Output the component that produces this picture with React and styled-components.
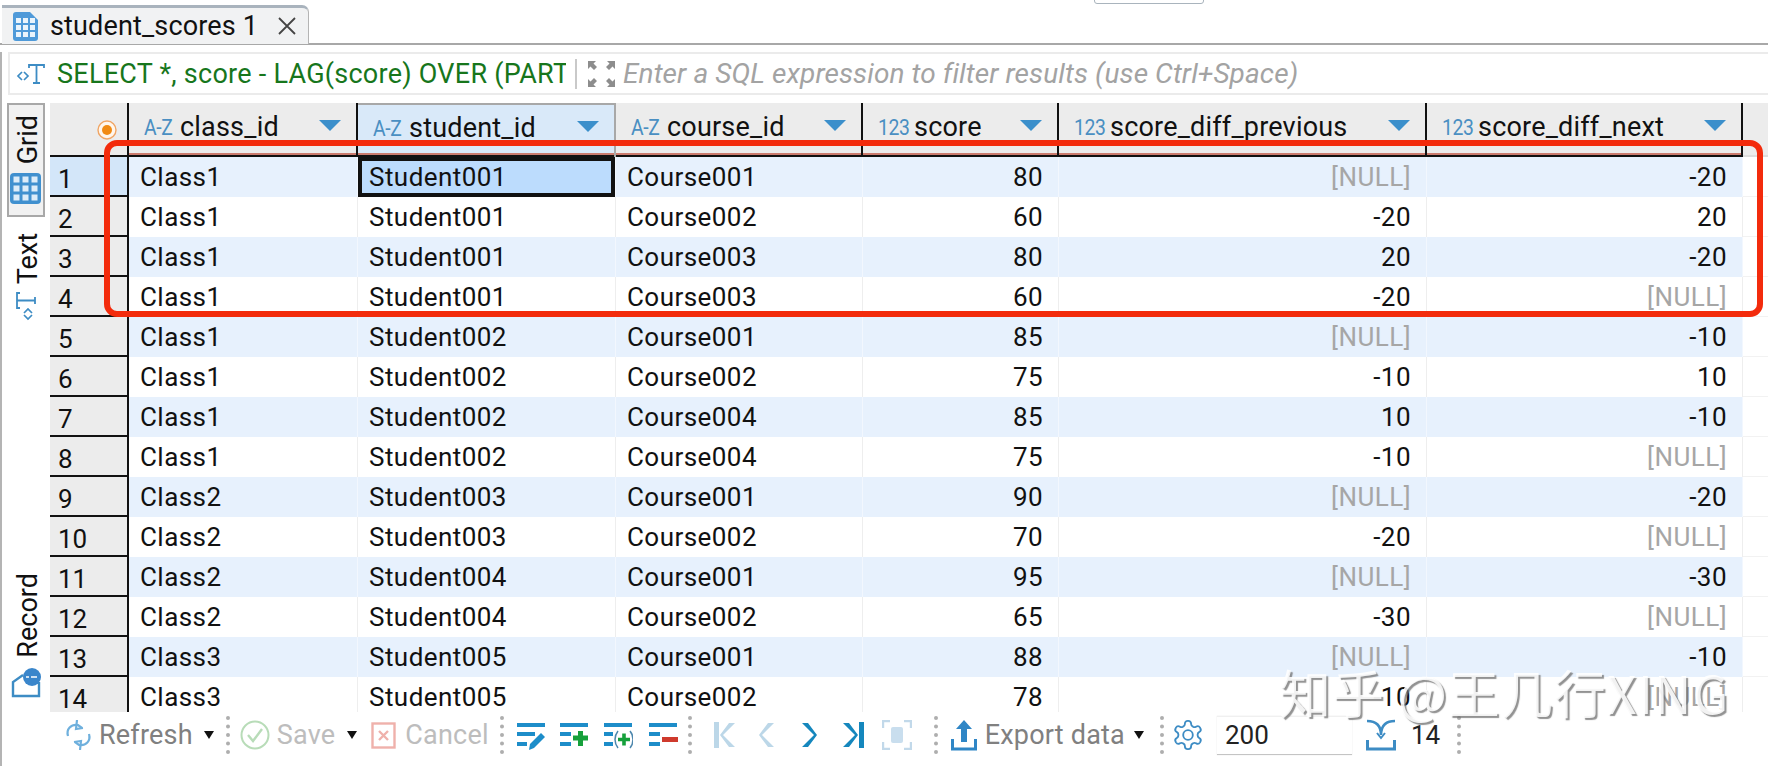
import React from 'react'
import styled, { createGlobalStyle } from 'styled-components'

const GlobalStyle = createGlobalStyle`
  html, body { margin: 0; padding: 0; background: #fff; }
  body { font-family: Roboto, "Liberation Sans", Arial, sans-serif; color: #111; }
`

const BLUE = '#3d8cc4'
const COLUMNS = '79px 229px 258px 247px 196px 368px 316px 25px'

const Page = styled.div`
  position: relative;
  width: 1768px;
  height: 766px;
  overflow: hidden;
  background: #fff;
`

const CutButton = styled.div`
  position: absolute;
  left: 1094px;
  top: -10px;
  width: 108px;
  height: 12px;
  border: 1px solid #a9b4bd;
  border-radius: 3px;
`

const TabStrip = styled.div`
  height: 45px;
  box-sizing: border-box;
  border-bottom: 2px solid #a8a8a8;
  display: flex;
  align-items: flex-end;
  padding-left: 2px;
`

const Tab = styled.div`
  width: 307px;
  height: 39px;
  box-sizing: border-box;
  background: #f1f2f3;
  border-top: 3px solid #a9b3bd;
  border-right: 1px solid #b4b4b4;
  border-top-right-radius: 7px;
  display: flex;
  align-items: center;
  padding-left: 11px;
  margin-bottom: -1px;
`

const TabTitle = styled.span`
  font-size: 27px;
  margin-left: 12px;
  letter-spacing: 0.15px;
`

const Body = styled.div`
  border-left: 2px solid #b4b4b4;
  height: 721px;
`

const FilterBar = styled.div`
  height: 43px;
  box-sizing: border-box;
  margin: 7px 0 8px 6px;
  border-top: 2px solid #ebebeb;
  border-bottom: 2px solid #ebebeb;
  border-left: 2px solid #ebebeb;
  display: flex;
  align-items: center;
  padding-left: 6px;
`

const SqlText = styled.span`
  width: 509px;
  margin-left: 11px;
  overflow: hidden;
  white-space: nowrap;
  font-size: 27px;
  letter-spacing: 0.25px;
  color: #17761c;
`

const FilterDivider = styled.span`
  width: 2px;
  height: 30px;
  margin: 0 10px 0 9px;
  background: #c9c9c9;
`

const Placeholder = styled.span`
  margin-left: 7px;
  font-size: 28px;
  letter-spacing: 0.1px;
  font-style: italic;
  color: #a3a3a3;
  white-space: nowrap;
`

const Main = styled.div`
  display: flex;
  height: 609px;
`

const Rail = styled.div`
  width: 48px;
  flex: none;
  display: flex;
  flex-direction: column;
  justify-content: space-between;
  padding-bottom: 14px;
  box-sizing: border-box;
`

const RailGroup = styled.div`
  display: flex;
  flex-direction: column;
  align-items: center;
`

const GridTab = styled.div`
  width: 38px;
  height: 114px;
  box-sizing: border-box;
  margin-left: -1px;
  border: 2px solid #a8a8a8;
  background: #f1f1f1;
  display: flex;
  flex-direction: column;
  align-items: center;
  padding-top: 10px;
`

const RailLabel = styled.span`
  writing-mode: vertical-rl;
  transform: rotate(180deg) translateX(-2px);
  font-size: 27px;
  line-height: 28px;
  margin-top: ${p => p.$top || 0}px;
  margin-bottom: ${p => p.$bottom || 0}px;
`

const Table = styled.div`
  flex: 1;
  overflow: hidden;
`

const HeaderRow = styled.div`
  display: grid;
  grid-template-columns: ${COLUMNS};
  height: 54px;
`

const Corner = styled.div`
  background: #ececec;
  border-right: 2px solid #111;
  border-bottom: 2px solid #111;
  display: flex;
  justify-content: flex-end;
  align-items: flex-start;
  padding: 17px 10px 0 0;
`

const HeaderCell = styled.div`
  box-sizing: border-box;
  height: 54px;
  background: ${p => (p.$active ? '#d9e9f9' : '#ececec')};
  border-top: ${p => (p.$active ? '2px solid #a8a8a8' : '0')};
  border-right: ${p => (p.$active ? '2px solid #a8a8a8' : '2px solid #111')};
  box-shadow: inset 0 -2px 0 #111, inset 0 -4px 0 #cb7b6e;
  display: flex;
  align-items: center;
  padding: 0 15px 6px 15px;
  font-size: 27px;
`

const HeaderFill = styled.div`
  background: #ececec;
  box-shadow: inset 0 -2px 0 #ddd;
`

const TypeTag = styled.span`
  color: #4a8fc2;
  font-size: 22px;
  letter-spacing: -0.4px;
  margin-right: 3px;
  transform: scaleX(0.88);
  transform-origin: left center;
  width: 33px;
  flex: none;
`

const ColName = styled.span`
  flex: 1;
  white-space: nowrap;
  letter-spacing: 0.2px;
`

const SortArrow = styled.span`
  width: 0;
  height: 0;
  border-left: 11px solid transparent;
  border-right: 11px solid transparent;
  border-top: 11px solid #3b8fcb;
  margin-top: -3px;
`

const Row = styled.div`
  display: grid;
  grid-template-columns: ${COLUMNS};
  grid-template-rows: 40px;
  height: 40px;
`

const RowNum = styled.div`
  box-sizing: border-box;
  background: ${p => (p.$current ? '#d3e6f9' : '#ececec')};
  border-right: 2px solid #111;
  border-bottom: 2px solid #111;
  padding: 5px 0 0 8px;
  font-size: 26px;
  line-height: 34px;
`

const Cell = styled.div`
  box-sizing: border-box;
  background: ${p => (p.$selected ? '#bcdcfd' : p.$stripe ? '#e7f1fd' : '#fff')};
  border-right: 1px solid ${p => (p.$stripe ? '#f2f7fe' : '#eeeeee')};
  box-shadow: ${p => (p.$selected ? 'inset 0 0 0 4px #111' : 'none')};
  padding: ${p => (p.$num ? '0 15px 0 0' : '0 0 0 11px')};
  text-align: ${p => (p.$num ? 'right' : 'left')};
  color: ${p => (p.$nil ? '#a6a6a6' : '#111')};
  font-size: 26px;
  line-height: 40px;
  letter-spacing: 0.45px;
  white-space: nowrap;
`

const RowEnd = styled.div`
  background: #fff;
  box-shadow: inset 0 -1px 0 #f2f2f2;
`

const Toolbar = styled.div`
  height: 46px;
  display: flex;
  align-items: center;
  padding-left: 63px;
  font-size: 27px;
`

const ToolIcon = styled.span`
  display: inline-flex;
  flex: none;
  margin-left: ${p => p.$ml || 0}px;
`

const ToolLabel = styled.span`
  color: ${p => (p.$off ? '#bdbdbd' : '#808080')};
  margin-left: ${p => p.$ml || 7}px;
  letter-spacing: 0.2px;
  white-space: nowrap;
`

const DropArrow = styled.span`
  width: 0;
  height: 0;
  border-left: 5px solid transparent;
  border-right: 5px solid transparent;
  border-top: 8px solid #111;
  margin-left: ${p => p.$ml}px;
`

const Sep = styled.span`
  height: 38px;
  border-left: 4px dotted #aeaeae;
  margin-left: ${p => p.$ml}px;
`

const LimitInput = styled.div`
  width: 135px;
  height: 39px;
  box-sizing: border-box;
  margin-left: 12px;
  padding-left: 8px;
  border-top: 1px solid #f0f0f0;
  border-bottom: 1px solid #c4c4c4;
  box-shadow: 0 0 1px #ddd;
  line-height: 36px;
  color: #222;
  font-size: 26px;
`

const RowCount = styled.span`
  margin-left: 15px;
  color: #222;
  font-size: 26px;
`

const RedFrame = styled.div`
  position: absolute;
  left: 104px;
  top: 140px;
  width: 1659px;
  height: 177px;
  box-sizing: border-box;
  border: 6px solid #f32b0c;
  border-radius: 13px;
  pointer-events: none;
`

const Watermark = styled.div`
  position: absolute;
  left: 1279px;
  top: 658px;
  font-family: "Noto Sans CJK SC", sans-serif;
  font-weight: 400;
  font-size: 52px;
  letter-spacing: 1px;
  line-height: 68px;
  white-space: nowrap;
  color: rgba(255, 255, 255, 0.88);
  text-shadow: 2px 2px 1px rgba(110, 110, 110, 0.75);
  pointer-events: none;
`

const TableIcon = () => (
  <svg width="25" height="29" viewBox="0 0 25 29">
    <path d="M3 0h14l8 8v18a3 3 0 0 1-3 3H3a3 3 0 0 1-3-3V3a3 3 0 0 1 3-3z" fill="#4f9ad9" />
    <g fill="#eaf4fc">
      {[3, 10, 17].map(x => [6, 13, 20].map(y => <rect key={x + '-' + y} x={x} y={y} width="5" height="5" />))}
    </g>
  </svg>
)

const CloseIcon = () => (
  <svg width="20" height="20" viewBox="0 0 20 20" style={{ marginLeft: 19 }}>
    <path d="M2 2l16 16M18 2L2 18" stroke="#444" strokeWidth="1.8" fill="none" />
  </svg>
)

const SqlIcon = ({ rotate }) => (
  <svg width="30" height="22" viewBox="0 0 30 22" style={rotate ? { transform: 'rotate(-90deg)' } : undefined}>
    <path d="M6 9l-4 4 4 4M8 9l4 4-4 4" stroke={BLUE} strokeWidth="1.7" fill="none" />
    <path d="M13 5V2h15v3M20.5 2v18M17 20h7" stroke={BLUE} strokeWidth="1.8" fill="none" />
  </svg>
)

const ExpandIcon = () => (
  <svg width="29" height="28" viewBox="0 0 29 28">
    <path d="M1 1h8l-2.5 2.5 3.5 3.5-3 3-3.5-3.5L1 9zM28 1h-8l2.5 2.5L19 7l3 3 3.5-3.5L28 9zM1 27h8l-2.5-2.5 3.5-3.5-3-3-3.5 3.5L1 19zM28 27h-8l2.5-2.5L19 21l3-3 3.5 3.5L28 19z" fill="#8d8d8d" />
  </svg>
)

const RadioDot = () => (
  <svg width="20" height="20" viewBox="0 0 20 20">
    <circle cx="10" cy="10" r="9" fill="#fff6ec" stroke="#f0a564" strokeWidth="1.4" />
    <circle cx="10" cy="10" r="5" fill="#f18a12" />
  </svg>
)

const GridIcon = () => (
  <svg width="31" height="31" viewBox="0 0 31 31" style={{ marginTop: 9 }}>
    <rect width="31" height="31" rx="4" fill="#4090cf" />
    <g fill="#dcecf9">
      {[3.5, 12.5, 21.5].map(x => [3.5, 12.5, 21.5].map(y => <rect key={x + '-' + y} x={x} y={y} width="6" height="6" />))}
    </g>
  </svg>
)

const RecordIcon = () => (
  <svg width="31" height="30" viewBox="0 0 31 30">
    <path d="M12 7L2 14v14h26V14" fill="none" stroke={BLUE} strokeWidth="2.4" />
    <circle cx="21" cy="9" r="9" fill="#3a86cb" />
    <path d="M15 9h3M20 9h6" stroke="#fff" strokeWidth="1.6" />
  </svg>
)

const RefreshIcon = () => (
  <svg width="27" height="32" viewBox="0 0 27 32" fill="none" stroke="#6fb0dd" strokeWidth="2.2">
    <path d="M3 17C1 10 6 5 13 6l4 3" />
    <path d="M12 1l-1 9 7-1" />
    <path d="M24 15c2 7-3 12-10 11l-4-3" />
    <path d="M15 31l1-9-7 1" />
  </svg>
)

const SaveIcon = () => (
  <svg width="30" height="30" viewBox="0 0 30 30" fill="none" stroke="#b8dcb8" strokeWidth="2">
    <circle cx="15" cy="15" r="13.5" />
    <path d="M8 15l5 6 9-12" strokeWidth="2.4" />
  </svg>
)

const CancelIcon = () => (
  <svg width="25" height="29" viewBox="0 0 25 29" fill="none" stroke="#efb1ab" strokeWidth="2.4">
    <rect x="1.5" y="2.5" width="22" height="24" />
    <path d="M8 10l9 9M17 10l-9 9" />
  </svg>
)

const Lines = ({ children, short = [0, 0] }) => (
  <svg width="30" height="30" viewBox="0 0 30 30">
    <rect x="1" y="3" width="28" height="4" fill="#1d8dc9" />
    <rect x="1" y="12" width={short[0]} height="4" fill="#1d8dc9" />
    <rect x="1" y="22" width={short[1]} height="4" fill="#1d8dc9" />
    {children}
  </svg>
)

const EditRowIcon = () => (
  <Lines short={[18, 10]}>
    <path d="M13 30l1-6 11-11 4 4-11 11z" fill="#1d8dc9" />
  </Lines>
)

const AddRowIcon = () => (
  <Lines short={[11, 11]}>
    <path d="M14 18h15M21.5 11v15" stroke="#16a03b" strokeWidth="5" />
  </Lines>
)

const CopyRowIcon = () => (
  <Lines short={[9, 9]}>
    <path d="M15 11c-4 5-4 12 0 17M27 11c4 5 4 12 0 17" stroke="#4d87ad" strokeWidth="1.5" fill="none" />
    <path d="M15 19.5h12M21 13.5v12" stroke="#16a03b" strokeWidth="3.6" />
  </Lines>
)

const DeleteRowIcon = () => (
  <Lines short={[11, 11]}>
    <rect x="14" y="17" width="16" height="5" fill="#cf3a2d" />
  </Lines>
)

const NavIcon = ({ dir, bar, on }) => {
  const color = on ? '#1587bd' : '#bcd7e8'
  const chevron = dir === 'left' ? 'M15 1L3 13l12 12h-6L0 13 9 1z' : 'M0 1l12 12L0 25h6l9-12L6 1z'
  return (
    <svg width={bar ? 21 : 15} height="26" viewBox={bar ? '0 0 21 26' : '0 0 15 26'}>
      <g transform={bar && dir === 'left' ? 'translate(6 0)' : undefined}>
        <path d={chevron} fill={color} />
      </g>
      {bar && <rect x={dir === 'left' ? 0 : 16} y="0" width="5" height="26" fill={color} />}
    </svg>
  )
}

const CaptureIcon = () => (
  <svg width="30" height="30" viewBox="0 0 30 30" fill="none" stroke="#c2d9ea" strokeWidth="2.4">
    <path d="M1 8V1h7M22 1h7v7M29 22v7h-7M8 29H1v-7" />
    <rect x="9" y="7" width="12" height="16" rx="2" fill="#c9deee" stroke="none" />
  </svg>
)

const ExportIcon = () => (
  <svg width="26" height="32" viewBox="0 0 26 32">
    <path d="M13 1l8 9h-5v13h-6V10H5z" fill="#2f86c6" />
    <path d="M1.5 20v10h23V20" stroke="#2f86c6" strokeWidth="3" fill="none" />
  </svg>
)

const GearIcon = () => (
  <svg width="34" height="34" viewBox="0 0 24 24" fill="none" stroke="#3d8cc4" strokeWidth="1.3">
    <path d="M12.2 2h-.4a2 2 0 0 0-2 2v.2a2 2 0 0 1-1 1.7l-.4.3a2 2 0 0 1-2 0l-.2-.1a2 2 0 0 0-2.7.7l-.2.4a2 2 0 0 0 .7 2.7l.2.1a2 2 0 0 1 1 1.7v.5a2 2 0 0 1-1 1.8l-.2.1a2 2 0 0 0-.7 2.7l.2.4a2 2 0 0 0 2.7.7l.2-.1a2 2 0 0 1 2 0l.4.3a2 2 0 0 1 1 1.7v.2a2 2 0 0 0 2 2h.4a2 2 0 0 0 2-2v-.2a2 2 0 0 1 1-1.7l.4-.3a2 2 0 0 1 2 0l.2.1a2 2 0 0 0 2.7-.7l.2-.4a2 2 0 0 0-.7-2.7l-.2-.1a2 2 0 0 1-1-1.8v-.5a2 2 0 0 1 1-1.7l.2-.1a2 2 0 0 0 .7-2.7l-.2-.4a2 2 0 0 0-2.7-.7l-.2.1a2 2 0 0 1-2 0l-.4-.3a2 2 0 0 1-1-1.7V4a2 2 0 0 0-2-2z" />
    <circle cx="12" cy="12" r="3.4" />
  </svg>
)

const FetchIcon = () => (
  <svg width="30" height="32" viewBox="0 0 30 32" fill="none" stroke="#3d8cc4" strokeWidth="3">
    <path d="M1 2c8 0 14 3 14 14M29 2c-8 0-14 3-14 14" strokeWidth="2.6" />
    <path d="M11 14l4 5 4-5" strokeWidth="2" />
    <path d="M1.5 21v9h27v-9" />
  </svg>
)

const COLS = [
  { name: 'class_id', type: 'A-Z' },
  { name: 'student_id', type: 'A-Z', active: true },
  { name: 'course_id', type: 'A-Z' },
  { name: 'score', type: '123' },
  { name: 'score_diff_previous', type: '123' },
  { name: 'score_diff_next', type: '123' }
]

const NIL = '[NULL]'

const ROWS = [
  ['Class1', 'Student001', 'Course001', '80', NIL, '-20'],
  ['Class1', 'Student001', 'Course002', '60', '-20', '20'],
  ['Class1', 'Student001', 'Course003', '80', '20', '-20'],
  ['Class1', 'Student001', 'Course003', '60', '-20', NIL],
  ['Class1', 'Student002', 'Course001', '85', NIL, '-10'],
  ['Class1', 'Student002', 'Course002', '75', '-10', '10'],
  ['Class1', 'Student002', 'Course004', '85', '10', '-10'],
  ['Class1', 'Student002', 'Course004', '75', '-10', NIL],
  ['Class2', 'Student003', 'Course001', '90', NIL, '-20'],
  ['Class2', 'Student003', 'Course002', '70', '-20', NIL],
  ['Class2', 'Student004', 'Course001', '95', NIL, '-30'],
  ['Class2', 'Student004', 'Course002', '65', '-30', NIL],
  ['Class3', 'Student005', 'Course001', '88', NIL, '-10'],
  ['Class3', 'Student005', 'Course002', '78', '-10', NIL]
]

const App = () => (
  <Page>
    <GlobalStyle />
    <CutButton />
    <TabStrip>
      <Tab>
        <TableIcon />
        <TabTitle>student_scores 1</TabTitle>
        <CloseIcon />
      </Tab>
    </TabStrip>
    <Body>
      <FilterBar>
        <SqlIcon />
        <SqlText>SELECT *, score - LAG(score) OVER (PARTITION BY class_id</SqlText>
        <FilterDivider />
        <ExpandIcon />
        <Placeholder>Enter a SQL expression to filter results (use Ctrl+Space)</Placeholder>
      </FilterBar>
      <Main>
        <Rail>
          <RailGroup>
            <GridTab>
              <RailLabel>Grid</RailLabel>
              <GridIcon />
            </GridTab>
            <RailLabel $top={16} $bottom={11}>Text</RailLabel>
            <SqlIcon rotate />
          </RailGroup>
          <RailGroup>
            <RailLabel $bottom={10}>Record</RailLabel>
            <RecordIcon />
          </RailGroup>
        </Rail>
        <Table>
          <HeaderRow>
            <Corner><RadioDot /></Corner>
            {COLS.map(col => (
              <HeaderCell key={col.name} $active={col.active}>
                <TypeTag>{col.type}</TypeTag>
                <ColName>{col.name}</ColName>
                <SortArrow />
              </HeaderCell>
            ))}
            <HeaderFill />
          </HeaderRow>
          {ROWS.map((row, i) => (
            <Row key={i}>
              <RowNum $current={i === 0}>{i + 1}</RowNum>
              {row.map((value, c) => (
                <Cell
                  key={c}
                  $stripe={i % 2 === 0}
                  $num={c > 2}
                  $nil={value === NIL}
                  $selected={i === 0 && c === 1}
                >
                  {value}
                </Cell>
              ))}
              <RowEnd />
            </Row>
          ))}
        </Table>
      </Main>
      <Toolbar>
        <ToolIcon><RefreshIcon /></ToolIcon>
        <ToolLabel>Refresh</ToolLabel>
        <DropArrow $ml={11} />
        <Sep $ml={12} />
        <ToolIcon $ml={10}><SaveIcon /></ToolIcon>
        <ToolLabel $off>Save</ToolLabel>
        <DropArrow $ml={12} />
        <ToolIcon $ml={14}><CancelIcon /></ToolIcon>
        <ToolLabel $off $ml={9}>Cancel</ToolLabel>
        <Sep $ml={11} />
        <ToolIcon $ml={12}><EditRowIcon /></ToolIcon>
        <ToolIcon $ml={13}><AddRowIcon /></ToolIcon>
        <ToolIcon $ml={14}><CopyRowIcon /></ToolIcon>
        <ToolIcon $ml={15}><DeleteRowIcon /></ToolIcon>
        <Sep $ml={10} />
        <ToolIcon $ml={22}><NavIcon dir="left" bar /></ToolIcon>
        <ToolIcon $ml={24}><NavIcon dir="left" /></ToolIcon>
        <ToolIcon $ml={28}><NavIcon dir="right" on /></ToolIcon>
        <ToolIcon $ml={26}><NavIcon dir="right" bar on /></ToolIcon>
        <ToolIcon $ml={18}><CaptureIcon /></ToolIcon>
        <Sep $ml={22} />
        <ToolIcon $ml={13}><ExportIcon /></ToolIcon>
        <ToolLabel $ml={8}>Export data</ToolLabel>
        <DropArrow $ml={9} />
        <Sep $ml={16} />
        <ToolIcon $ml={7}><GearIcon /></ToolIcon>
        <LimitInput>200</LimitInput>
        <ToolIcon $ml={14}><FetchIcon /></ToolIcon>
        <RowCount>14</RowCount>
        <Sep $ml={17} />
      </Toolbar>
    </Body>
    <RedFrame />
    <Watermark>知乎 @王几行XING</Watermark>
  </Page>
)

export default App
